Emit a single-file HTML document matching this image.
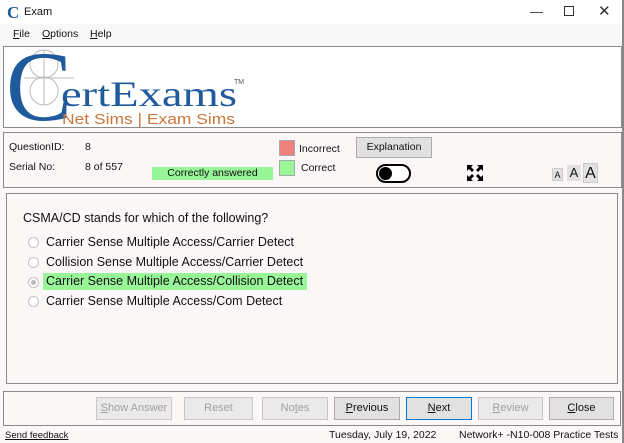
<!DOCTYPE html>
<html><head><meta charset="utf-8"><style>
*{margin:0;padding:0;box-sizing:border-box}
body{width:624px;height:443px;overflow:hidden;background:#fcf7f7;font-family:"Liberation Sans",Arial,sans-serif;font-size:12px;color:#111;position:relative}
.a{position:absolute;white-space:nowrap}
.btn{position:absolute;top:397px;height:23px;border:1px solid #adadad;background:#e1e1e1;text-align:center;line-height:21px;font-size:11px}
.dis{color:#a0a0a0;border-color:#c8c8c8;background:#eaeaea}
.rad{position:absolute;left:28px;width:11px;height:11px;border:1px solid #c4c4c4;border-radius:50%;background:#fff}
.opt{position:absolute;left:46px;font-size:12.5px;white-space:nowrap}
</style></head><body>
<div class="a" style="left:0;top:0;width:624px;height:24px;background:#fff"></div>
<div class="a" style="left:7px;top:3px;font-size:17px;font-weight:bold;color:#1f5a9c;font-family:'Liberation Serif',serif">C</div>
<div class="a" style="left:24px;top:6px;font-size:11px">Exam</div>
<div class="a" style="left:530px;top:4px;font-size:13px;color:#333">&#8212;</div>
<div class="a" style="left:564px;top:6px;width:10px;height:10px;border:1px solid #333"></div>
<div class="a" style="left:598px;top:2px;font-size:15px;color:#333">&#10005;</div>
<div class="a" style="left:0;top:24px;width:624px;height:20px;background:#f8f8f8"></div>
<div class="a" style="left:13px;top:28px;font-size:10.5px"><u>F</u>ile</div>
<div class="a" style="left:42px;top:28px;font-size:10.5px"><u>O</u>ptions</div>
<div class="a" style="left:90px;top:28px;font-size:10.5px"><u>H</u>elp</div>
<div class="a" style="left:3px;top:46px;width:619px;height:82px;background:#fff;border:1px solid #8a8a8a"></div>
<svg class="a" style="left:4px;top:47px" width="240" height="80">
<ellipse cx="40" cy="17" rx="14" ry="14" fill="none" stroke="#bbb"/><ellipse cx="40" cy="44" rx="14" ry="14" fill="none" stroke="#bbb"/>
<line x1="20" y1="31" x2="70" y2="31" stroke="#bbb"/><line x1="40" y1="3" x2="40" y2="58" stroke="#bbb"/>
<text x="2" y="73" font-family="Liberation Serif,serif" font-size="100" fill="#1f5a9c" textLength="66" lengthAdjust="spacingAndGlyphs">C</text>
<text x="57" y="59" font-family="Liberation Serif,serif" font-size="36" fill="#1f5a9c" textLength="176" lengthAdjust="spacingAndGlyphs">ertExams</text>
<text x="230" y="37" font-size="7" fill="#555">TM</text>
<text x="58" y="77" font-family="Liberation Sans,sans-serif" font-size="15" fill="#c8763c" textLength="173" lengthAdjust="spacingAndGlyphs">Net Sims | Exam Sims</text>
</svg>
<div class="a" style="left:3px;top:132px;width:619px;height:56px;border:1px solid #8a8a8a"></div>
<div class="a" style="left:9px;top:141px;font-size:10.5px">QuestionID:</div>
<div class="a" style="left:85px;top:141px;font-size:10.5px">8</div>
<div class="a" style="left:9px;top:161px;font-size:10.5px">Serial No:</div>
<div class="a" style="left:85px;top:161px;font-size:10.5px">8 of 557</div>
<div class="a" style="left:152px;top:167px;width:121px;height:13px;background:#98f598;font-size:10.5px;text-align:center;line-height:13px">Correctly answered</div>
<div class="a" style="left:279px;top:140px;width:16px;height:16px;background:#f08080;border:1px solid #aaa"></div>
<div class="a" style="left:299px;top:143px;font-size:10.5px">Incorrect</div>
<div class="a" style="left:279px;top:160px;width:16px;height:16px;background:#98f598;border:1px solid #aaa"></div>
<div class="a" style="left:301px;top:162px;font-size:10.5px">Correct</div>
<div class="a" style="left:356px;top:137px;width:76px;height:21px;background:#e1e1e1;border:1px solid #adadad;text-align:center;line-height:19px;font-size:10.5px">Explanation</div>
<div class="a" style="left:376px;top:164px;width:35px;height:19px;border:2px solid #000;border-radius:10px;background:#fff"></div>
<div class="a" style="left:379px;top:167px;width:13px;height:13px;border-radius:50%;background:#000"></div>
<svg class="a" style="left:466px;top:164px" width="18" height="18"><g fill="#000"><path d="M1 1h6l-2 2 3 3-2 2-3-3-2 2z"/><path d="M17 1h-6l2 2-3 3 2 2 3-3 2 2z"/><path d="M1 17h6l-2-2 3-3-2-2-3 3-2-2z"/><path d="M17 17h-6l2-2-3-3 2-2 3 3 2-2z"/></g></svg>
<div class="a" style="left:552px;top:168px;width:11px;height:13px;background:#e1e1e1;border:1px solid #ccc;font-size:9px;text-align:center;line-height:12px">A</div>
<div class="a" style="left:567px;top:165px;width:14px;height:16px;background:#e1e1e1;font-size:13px;text-align:center;line-height:16px">A</div>
<div class="a" style="left:583px;top:163px;width:15px;height:20px;background:#e1e1e1;border:1px solid #ccc;font-size:16px;text-align:center;line-height:20px">A</div>
<div class="a" style="left:6px;top:193px;width:612px;height:191px;border:1px solid #8a8a8a"></div>
<div class="a" style="left:23px;top:211px;font-size:12.5px">CSMA/CD stands for which of the following?</div>
<div class="rad" style="top:237px"></div><div class="opt" style="top:235px">Carrier Sense Multiple Access/Carrier Detect</div>
<div class="rad" style="top:257px"></div><div class="opt" style="top:255px">Collision Sense Multiple Access/Carrier Detect</div>
<div class="a" style="left:43px;top:273px;width:264px;height:17px;background:#98f598"></div>
<div class="rad" style="top:277px"></div><div class="a" style="left:31px;top:280px;width:5px;height:5px;border-radius:50%;background:#bbb"></div>
<div class="opt" style="top:274px">Carrier Sense Multiple Access/Collision Detect</div>
<div class="rad" style="top:296px"></div><div class="opt" style="top:294px">Carrier Sense Multiple Access/Com Detect</div>
<div class="a" style="left:3px;top:391px;width:618px;height:35px;border:1px solid #8a8a8a"></div>
<div class="btn dis" style="left:96px;width:76px"><u>S</u>how Answer</div>
<div class="btn dis" style="left:184px;width:69px">Reset</div>
<div class="btn dis" style="left:262px;width:66px">No<u>t</u>es</div>
<div class="btn" style="left:334px;width:66px"><u>P</u>revious</div>
<div class="btn" style="left:406px;width:66px;border-color:#0078d7"><u>N</u>ext</div>
<div class="btn dis" style="left:478px;width:65px"><u>R</u>eview</div>
<div class="btn" style="left:549px;width:65px"><u>C</u>lose</div>
<div class="a" style="left:5px;top:430px;font-size:9.5px;text-decoration:underline">Send feedback</div>
<div class="a" style="left:329px;top:429px;font-size:10.5px">Tuesday, July 19, 2022</div>
<div class="a" style="left:459px;top:429px;font-size:10.5px">Network+ -N10-008 Practice Tests</div>
<div class="a" style="left:622px;top:0;width:2px;height:443px;background:#888"></div>
</body></html>
